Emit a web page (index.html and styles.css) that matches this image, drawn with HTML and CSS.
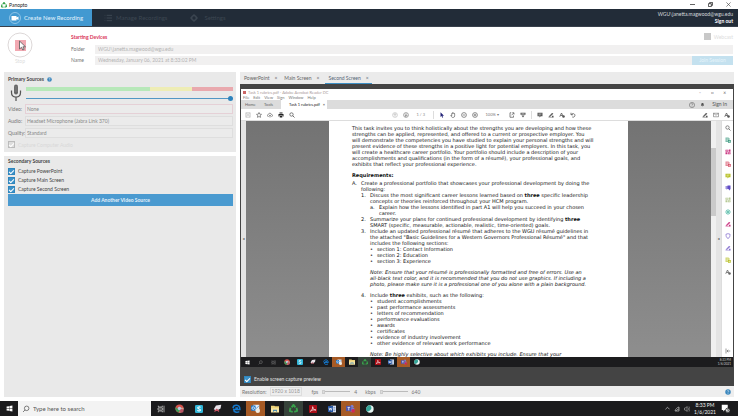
FILE: index.html
```html
<!DOCTYPE html>
<html lang="en">
<head>
<meta charset="utf-8">
<title>Panopto</title>
<link rel="stylesheet" href="styles.css">
</head>
<body>
<svg class="sprite" aria-hidden="true">
  <symbol id="win" viewBox="0 0 12 12"><path fill="#fff" d="M1 2.6 5.4 2v3.7H1zM6 1.9 11 1v4.7H6zM1 6.3h4.4V10L1 9.4zM6 6.3h5V11l-5-.9z"/></symbol>
  <symbol id="search" viewBox="0 0 12 12"><circle cx="7" cy="5" r="3.4" fill="none" stroke="currentColor"/><path d="M4.6 7.4 1.5 10.5" stroke="currentColor"/></symbol>
  <symbol id="zoomer" viewBox="0 0 12 12"><circle cx="5" cy="5" r="3.4" fill="none" stroke="currentColor" stroke-width="1.5"/><path d="M7.5 7.5 11 11" stroke="currentColor" stroke-width="1.7"/></symbol>
  <symbol id="taskview" viewBox="0 0 12 12"><path d="M2 1v2h6V1M2 11V9h6v2M1.500 4.500h7v3h-7zM10.500 1v10" fill="none" stroke="#ddd"/></symbol>
  <symbol id="chrome" viewBox="0 0 12 12"><circle cx="6" cy="6" r="5.500" fill="#d6534c"/><path d="M.8 4.200A5.500 5.500 0 0 0 5 11.400L7 7.500 3.500 6z" fill="#3f9a58"/><path d="M11.400 5A5.500 5.500 0 0 1 5.500 11.500L8 7V5z" fill="#d7a08e"/><circle cx="6" cy="6" r="2.300" fill="#bcc9df"/><circle cx="9" cy="9" r="2.500" fill="#b65363"/></symbol>
  <symbol id="skype" viewBox="0 0 12 12"><rect width="12" height="12" rx="2" fill="#31b6d9"/><path d="M8.300 3.700C7 2.400 4 2.600 4 4.300c0 2 4.200 1.200 4.200 3.300 0 1.700-3.200 1.900-4.600.5" fill="none" stroke="#fff" stroke-width="1.600"/></symbol>
  <symbol id="snip" viewBox="0 0 12 12"><path d="M1 7 4 2l7-1-1 5-5 3z" fill="#e7e3ea"/><path d="m2 10 3-3 3 3" fill="none" stroke="#c85262" stroke-width="1.500"/></symbol>
  <symbol id="edge" viewBox="0 0 12 12"><path d="M2 7.200h8.500C10.500 0 2 .5 1.300 5.500M2.300 6.500c-.5 4.500 4.200 5.300 7.500 3.700M4.500 5.200h3.600" fill="none" stroke="#1578cc" stroke-width="2"/></symbol>
  <symbol id="outlook" viewBox="0 0 12 12"><rect x="3" y="1" width="8" height="8" fill="#e9eef6"/><path d="m3 2 4 4 4-4" fill="none" stroke="#3d87c9"/><rect x="0" y="2" width="6" height="7" fill="#2576c3"/><circle cx="3" cy="5.500" r="1.700" fill="none" stroke="#fff"/><circle cx="9" cy="9" r="3" fill="#f1ede4"/></symbol>
  <symbol id="explorer" viewBox="0 0 12 12"><path d="M0 1h5l1 1h6v9H0z" fill="#efd47b"/><path d="M0 5h12v6H0z" fill="#f8e7a7"/><path d="M3 7h6v4H8V9H4v2H3z" fill="#508fb0"/></symbol>
  <symbol id="panopto" viewBox="0 0 12 12"><path d="M3.500 4.500 6 1l2.500 3.500M10 5l1 4-4 1.500M5 10.500 1 9.500 2 5" fill="none" stroke="#38a34b" stroke-width="2.400"/></symbol>
  <symbol id="acrobat" viewBox="0 0 12 12"><rect width="12" height="12" rx="1" fill="#a80d16"/><path d="M2 9.500C4 8 6 5 5.500 2.500 6 6 8 8 10.500 7.500 7 6.500 4 8 2 9.500" fill="none" stroke="#fff"/></symbol>
  <symbol id="word" viewBox="0 0 12 12"><rect x="4" y="1" width="8" height="10" fill="#e6edf8"/><path d="M8 3.500h3M8 6h3M8 8.500h3" stroke="#3c62ab"/><rect y="1.500" width="7.500" height="9" fill="#2453a0"/><path d="M1.500 4 2.500 8 3.700 4.500 5 8 6 4" fill="none" stroke="#fff"/></symbol>
  <symbol id="teams" viewBox="0 0 12 12"><circle cx="8" cy="3" r="2" fill="#7f82d4"/><path d="M5 5h6v4l-3 2-3-2z" fill="#777bd0"/><rect y="2.500" width="7" height="7" fill="#5055a9"/><path d="M2 4.500h3.500M3.700 4.500v4" stroke="#fff"/><circle cx="9.500" cy="9" r="2.500" fill="#d32954"/></symbol>
  <symbol id="globe" viewBox="0 0 12 12"><circle cx="6" cy="6" r="5.500" fill="#e7f5f2"/><path d="M6 .5A5.500 5.500 0 0 0 2 10l3-1 3-3V3z" fill="#35a598"/></symbol>
  <symbol id="help" viewBox="0 0 12 12"><circle cx="6" cy="6" r="5.500" fill="#3b87bd"/><path d="M4.300 4.500c.2-2 3.500-1.700 3.300 0C7.500 5.600 6 5.600 6 7.200M6 8.500V10" fill="none" stroke="#fff"/></symbol>
  <symbol id="ask" viewBox="0 0 12 12"><circle cx="6" cy="6" r="5.200" fill="none" stroke="currentColor"/><path d="M4.300 4.500c.2-2 3.500-1.700 3.300 0C7.500 5.600 6 5.600 6 7.200M6 8.300v1.200" fill="none" stroke="currentColor"/></symbol>
  <symbol id="page" viewBox="0 0 12 12"><path d="M1 1h6l2 2v7H1z" fill="currentColor" opacity=".65"/><path d="M3 4h4M3 6.500h3" stroke="#fff"/><path d="M6 6h5.500v5.500H6z" fill="currentColor"/><path d="M7 8.800h3.500M8.800 7v3.500" stroke="#fff" stroke-width=".8"/></symbol>
  <symbol id="grid" viewBox="0 0 12 12"><path d="M1 1.500h6v4H1zM1 6.500h4v4H1zM6 6.500h5v4H6zM8 1h3v4.500H8z" fill="currentColor"/><path d="M2 3.500h4M7 8.500h3" stroke="#fff"/></symbol>
  <symbol id="bubble" viewBox="0 0 12 12"><path d="M1 1.500h10v7H7.500L5 11V8.500H1z" fill="currentColor"/><path d="M3 4h6M3 6h4" stroke="#fff" stroke-width=".9"/></symbol>
  <symbol id="duo" viewBox="0 0 12 12"><path d="M1 2h7v6H5l-2 2V8H1z" fill="currentColor" opacity=".6"/><path d="M5 1h6v7L8.500 11 7 8H5z" fill="currentColor"/></symbol>
  <symbol id="ring" viewBox="0 0 12 12"><circle cx="6" cy="6" r="4.200" fill="none" stroke="currentColor" stroke-width="1.600"/><path d="M4 4.500h4v3H4z" fill="currentColor"/></symbol>
  <symbol id="pen" viewBox="0 0 12 12"><path d="M1 10.500h10M2 9l6.500-7L10 3.500 4 9z" fill="currentColor" stroke="currentColor"/><path d="M8 7.500h3v3H8z" fill="currentColor"/></symbol>
  <symbol id="shield" viewBox="0 0 12 12"><path d="M6 1.200c1.500 1 3 1 4 1 0 4.500-.5 7-4 8.800C2.500 9.200 2 6.700 2 2.200c1 0 2.500 0 4-1z" fill="none" stroke="currentColor" stroke-width="1.500"/></symbol>
  <symbol id="person" viewBox="0 0 12 12"><path d="M1.500 9.500 5 2l3.500 7.500M3 7h4" fill="none" stroke="currentColor" stroke-width="1.600"/><circle cx="9" cy="9" r="2.500" fill="currentColor"/></symbol>
  <symbol id="save" viewBox="0 0 12 12"><path d="M1.500 1.500h9v9h-9zM3.500 1.500v3h5v-3M3.500 10.500v-4h5v4" fill="none" stroke="currentColor"/></symbol>
  <symbol id="star" viewBox="0 0 12 12"><path d="m6 1 1.500 3.300 3.500.4-2.600 2.400.7 3.600L6 9l-3.100 1.700.7-3.600L1 4.700l3.500-.4z" fill="none" stroke="currentColor" stroke-width="1.300"/></symbol>
  <symbol id="cloud" viewBox="0 0 12 12"><path d="M3.500 9H3a2 2 0 0 1-.3-4C3 1.500 8.500 1.500 9 5a2 2 0 0 1 0 4h-.5M6 11V6M4.200 7.500 6 5.800l1.800 1.700" fill="none" stroke="currentColor" stroke-width="1.200"/></symbol>
  <symbol id="print" viewBox="0 0 12 12"><path d="M3 1h6v2H3zM1 4h10v5H9.500V7h-7v2H1zM3.500 8h5v3h-5z" fill="currentColor"/></symbol>
  <symbol id="up" viewBox="0 0 12 12"><circle cx="6" cy="6" r="4.800" fill="none" stroke="currentColor"/><path d="M6 9V3.500M3.700 5.500 6 3.200l2.300 2.300" fill="none" stroke="currentColor" stroke-width="1.300"/></symbol>
  <symbol id="down" viewBox="0 0 12 12"><circle cx="6" cy="6" r="4.800" fill="none" stroke="currentColor"/><path d="M6 3v5.500M3.700 6.500 6 8.800l2.300-2.300" fill="none" stroke="currentColor" stroke-width="1.300"/></symbol>
  <symbol id="minus" viewBox="0 0 12 12"><circle cx="6" cy="6" r="4.800" fill="none" stroke="currentColor" stroke-width="1.300"/><path d="M3.500 6h5" stroke="currentColor" stroke-width="1.300"/></symbol>
  <symbol id="plus" viewBox="0 0 12 12"><circle cx="6" cy="6" r="4.800" fill="none" stroke="currentColor" stroke-width="1.300"/><path d="M3.500 6h5M6 3.500v5" stroke="currentColor" stroke-width="1.300"/></symbol>
  <symbol id="arrow" viewBox="0 0 12 12"><path d="M3 .5v9.500l2.300-2 1.500 3.500 1.500-.7L6.800 7.500H10z" fill="currentColor"/></symbol>
  <symbol id="hand" viewBox="0 0 12 12"><path d="M3.500 7.500V3.200c0-1 1.300-1 1.300 0V2c0-1 1.500-1 1.500 0v.5c0-1 1.500-1 1.500 0v1c0-1 1.500-.8 1.500 0v4.200c0 4-5 4.300-6.500 1.500L1.500 6.800c.5-1 1.500-.3 2 .7z" fill="none" stroke="currentColor" stroke-width="1.300"/></symbol>
  <symbol id="fit" viewBox="0 0 12 12"><path d="M2 4V1.500h2.500M2 4l0 6.500h7V7M5 6.500 9.500 2M6.500 1.500h3.500V5" fill="none" stroke="currentColor" stroke-width="1.400"/></symbol>
  <symbol id="screen" viewBox="0 0 12 12"><path d="M1 1.500h10v4H1zM3 7l3 4 3-4z" fill="currentColor"/><path d="M3 3.500h6" stroke="#fff"/></symbol>
  <symbol id="undo" viewBox="0 0 12 12"><path d="M2 1.500v4h4M2.500 5.200c3-4 8-1.200 7.300 2C9.300 10 7 11 4.500 10" fill="none" stroke="currentColor" stroke-width="1.600"/></symbol>
  <symbol id="mail" viewBox="0 0 12 12"><path d="M1 2.500h10v7H1zl5 4 5-4" fill="none" stroke="currentColor"/></symbol>
  <symbol id="bell" viewBox="0 0 12 12"><path d="M2 9c2-1.500 0-6.500 4-6.500S8 7.500 10 9zM5 10h2v1H5z" fill="currentColor"/></symbol>
  <symbol id="expand" viewBox="0 0 12 12"><path d="M2 1v10M10.500 6H4M6.500 3.500 4 6l2.500 2.500" fill="none" stroke="currentColor" stroke-width="1.300"/></symbol>
</svg>

<header class="titlebar">
  <svg class="icon i6"><use href="#panopto"/></svg>
  <span class="app-name">Panopto</span>
  <div class="window-buttons">
    <button aria-label="Minimize"><svg class="icon i5" viewBox="0 0 12 12"><path d="M0 6h12" stroke="#444" stroke-width="2"/></svg></button>
    <button aria-label="Restore"><svg class="icon i5" viewBox="0 0 12 12"><path d="M1 4h7v7H1zM4 4V1h7v7H8" fill="none" stroke="#333" stroke-width="2"/></svg></button>
    <button aria-label="Close"><svg class="icon i5" viewBox="0 0 12 12"><path d="m1 1 10 10M11 1 1 11" stroke="#444" stroke-width="1.500"/></svg></button>
  </div>
</header>

<nav class="nav">
  <a class="nav-item active" href="#new"><svg class="icon i12" viewBox="0 0 24 24"><circle cx="12" cy="12" r="11" fill="none" stroke="#a7d2ee" stroke-width="1.500"/><path d="M5 8h10v3l4-2v7l-4-2v3H5z" fill="#fff"/></svg>Create New Recording</a>
  <a class="nav-item manage" href="#manage"><svg class="icon i8" viewBox="0 0 12 12"><path d="M1 2h1M4 2h8M1 6h1M4 6h8M1 10h1M4 10h8" stroke="currentColor" stroke-width="1.500"/></svg>Manage Recordings</a>
  <a class="nav-item settings" href="#settings"><svg class="icon i8" viewBox="0 0 12 12"><circle cx="6" cy="6" r="3.500" fill="none" stroke="currentColor" stroke-width="2"/><path d="M6 0v3M6 9v3M0 6h3M9 6h3" stroke="currentColor" stroke-width="1.500"/></svg>Settings</a>
  <div class="account"><span>WGU\janetta.magwood@wgu.edu</span><a href="#out">Sign out</a></div>
</nav>

<section class="session">
  <div class="record">
    <button class="record-button" aria-label="Stop"><svg class="record-icon" viewBox="0 0 26 26"><circle cx="13" cy="13" r="12" fill="#fff" stroke="#ddd8d8"/><rect x="8" y="8" width="11" height="11" fill="#f2a9b2"/><path d="M12.500 9v8l2-1.700 1.300 2.700 1.400-.7-1.300-2.500h2.600z" fill="#fff" stroke="#555" stroke-width=".8"/></svg></button>
    <span>Stop</span>
  </div>
  <form class="details">
    <div class="status-row"><strong>Starting Devices</strong><label class="webcast"><input type="checkbox" disabled>Webcast</label></div>
    <div class="field"><label for="folder">Folder</label><select id="folder" disabled><option>WGU\janetta.magwood@wgu.edu</option></select></div>
    <div class="field"><label for="name">Name</label><div class="name-box"><input id="name" value="Wednesday, January 06, 2021 at 8:33:02 PM" disabled><button type="button" disabled>Join Session</button></div></div>
  </form>
</section>

<main class="workspace">
  <aside class="sources">
    <section class="panel primary">
      <h2>Primary Sources <svg class="icon i5"><use href="#help"/></svg></h2>
      <div class="audio">
        <svg class="mic" viewBox="0 0 24 36"><rect x="8" y="1" width="8" height="20" rx="4" fill="#666"/><path d="M3 13v4c0 12 18 12 18 0v-4M12 26v8" fill="none" stroke="#555" stroke-width="2.500"/><path d="M9 6h6M9 10h6M9 14h6" stroke="#999"/></svg>
        <div class="levels"><div class="meter"><i class="ok"></i><i class="warm"></i><i class="hot"></i></div><input class="volume" type="range" value="100" aria-label="Volume"></div>
      </div>
      <div class="source-row"><label for="video">Video:</label><select id="video" class="alert"><option>None</option></select></div>
      <div class="source-row"><label for="audio">Audio:</label><select id="audio"><option>Headset Microphone (Jabra Link 370)</option></select></div>
      <div class="source-row"><label for="quality">Quality:</label><select id="quality"><option>Standard</option></select></div>
      <label class="check faded"><input type="checkbox" checked disabled>Capture Computer Audio</label>
    </section>
    <section class="panel secondary">
      <h2>Secondary Sources</h2>
      <label class="check"><input type="checkbox" checked>Capture PowerPoint</label>
      <label class="check"><input type="checkbox" checked>Capture Main Screen</label>
      <label class="check"><input type="checkbox" checked>Capture Second Screen</label>
      <button class="add">Add Another Video Source</button>
    </section>
  </aside>

  <section class="viewer">
    <div class="tabs"><button>PowerPoint <span>×</span></button><button>Main Screen <span>×</span></button><button class="selected">Second Screen <span>×</span></button></div>
    <div class="stage">
      <div class="screen">
        <div class="pdf-title"><i></i>Task 1 rubrics.pdf - Adobe Acrobat Reader DC<span class="pdf-window">–</span><span>▫</span><span>×</span></div>
        <div class="pdf-menu"><b>File</b><b>Edit</b><b>View</b><b>Sign</b><b>Window</b><b>Help</b></div>
        <div class="pdf-tabs"><span class="home">Home</span><span class="tools-tab">Tools</span><span class="file">Task 1 rubrics.pdf <b>×</b></span><div class="pdf-user"><svg class="icon i6"><use href="#ask"/></svg><svg class="icon i5"><use href="#bell"/></svg><span>Sign In</span></div></div>
        <div class="pdf-bar">
          <div class="group left"><svg class="icon i6 pale"><use href="#save"/></svg><svg class="icon i6"><use href="#star"/></svg><svg class="icon i6"><use href="#cloud"/></svg><svg class="icon i6 ink"><use href="#print"/></svg><svg class="icon i6"><use href="#zoomer"/></svg></div>
          <div class="group mid"><svg class="icon i6 pale"><use href="#up"/></svg><svg class="icon i6"><use href="#down"/></svg><span class="pages">1 / 3</span><i class="rule"></i><svg class="icon i6 navy"><use href="#arrow"/></svg><svg class="icon i6"><use href="#hand"/></svg><svg class="icon i6"><use href="#minus"/></svg><svg class="icon i6"><use href="#plus"/></svg><span class="percent">100% ▾</span><svg class="icon i6"><use href="#fit"/></svg><svg class="icon i6"><use href="#screen"/></svg><i class="rule"></i><svg class="icon i6"><use href="#bubble"/></svg><svg class="icon i6"><use href="#pen"/></svg><svg class="icon i6"><use href="#person"/></svg><svg class="icon i6"><use href="#undo"/></svg></div>
          <div class="group right"><svg class="icon i6"><use href="#pen"/></svg><svg class="icon i6"><use href="#mail"/></svg><svg class="icon i6"><use href="#person"/></svg></div>
        </div>
        <div class="pdf-body">
          <div class="gutter">◂</div>
          <div class="canvas">
            <article class="page">
              <p>This task invites you to think holistically about the strengths you are developing and how these<br>strengths can be applied, represented, and offered to a current or prospective employer. You<br>will demonstrate the competencies you have studied to explain your personal strengths and will<br>present evidence of these strengths in a positive light for potential employers. In this task, you<br>will create a healthcare career portfolio. Your portfolio should include a description of your<br>accomplishments and qualifications (in the form of a résumé), your professional goals, and<br>exhibits that reflect your professional experience.</p>
              <h3>Requirements:</h3>
              <ol class="alpha"><li>Create a professional portfolio that showcases your professional development by doing the<br>following:
                <ol class="numbers">
                  <li>Discuss the most significant career lessons learned based on <b>three</b> specific leadership<br>concepts or theories reinforced throughout your HCM program.
                    <ol class="lower"><li>Explain how the lessons identified in part A1 will help you succeed in your chosen<br>career.</li></ol></li>
                  <li>Summarize your plans for continued professional development by identifying <b>three</b><br>SMART (specific, measurable, actionable, realistic, time-oriented) goals.</li>
                  <li>Include an updated professional résumé that adheres to the WGU résumé guidelines in<br>the attached "Basic Guidelines for a Western Governors Professional Résumé" and that<br>includes the following sections:
                    <ul><li>section 1: Contact Information</li><li>section 2: Education</li><li>section 3: Experience</li></ul>
                    <p class="note">Note: Ensure that your résumé is professionally formatted and free of errors. Use an<br>all-black text color, and it is recommended that you do not use graphics. If including a<br>photo, please make sure it is a professional one of you alone with a plain background.</p></li>
                  <li>Include <b>three</b> exhibits, such as the following:
                    <ul><li>student accomplishments</li><li>past performance assessments</li><li>letters of recommendation</li><li>performance evaluations</li><li>awards</li><li>certificates</li><li>evidence of industry involvement</li><li>other evidence of relevant work performance</li></ul>
                    <p class="note">Note: Be highly selective about which exhibits you include. Ensure that your</p></li>
                </ol></li></ol>
            </article>
          </div>
          <div class="scroll"><i></i></div>
          <div class="gutter">◂</div>
          <div class="tool-rail">
            <svg class="icon i6"><use href="#zoomer"/></svg><svg class="icon i6 teal"><use href="#page"/></svg><svg class="icon i6 pink"><use href="#grid"/></svg><svg class="icon i6 red"><use href="#page"/></svg><svg class="icon i6 lime"><use href="#bubble"/></svg><svg class="icon i6 violet"><use href="#duo"/></svg><svg class="icon i6 sage"><use href="#grid"/></svg><svg class="icon i6 aqua"><use href="#ring"/></svg><svg class="icon i6 pink"><use href="#pen"/></svg><svg class="icon i6 lilac"><use href="#shield"/></svg><svg class="icon i6 lilac"><use href="#pen"/></svg><svg class="icon i6 lime"><use href="#page"/></svg><svg class="icon i6"><use href="#person"/></svg><svg class="icon i6 last"><use href="#expand"/></svg>
          </div>
        </div>
        <div class="mini-taskbar"><span><svg class="icon i5"><use href="#win"/></svg></span><span><svg class="icon i5 grey"><use href="#search"/></svg></span><span><svg class="icon i5 dim"><use href="#taskview"/></svg></span><span><svg class="icon i6"><use href="#chrome"/></svg></span><span><svg class="icon i6"><use href="#skype"/></svg></span><span><svg class="icon i6"><use href="#snip"/></svg></span><span><svg class="icon i6"><use href="#edge"/></svg></span><span class="hot-app"><svg class="icon i6"><use href="#outlook"/></svg></span><span><svg class="icon i6"><use href="#explorer"/></svg></span><span class="open-app"><svg class="icon i6"><use href="#panopto"/></svg></span><span><svg class="icon i6"><use href="#acrobat"/></svg></span><span><svg class="icon i6"><use href="#word"/></svg></span><span class="hot-app"><svg class="icon i6"><use href="#teams"/></svg></span><span><svg class="icon i6"><use href="#globe"/></svg></span><time>8:33 PM<br>1/6/2021</time></div>
      </div>
      <label class="check preview"><input type="checkbox" checked>Enable screen capture preview</label>
    </div>
    <div class="capture">
      <label for="res">Resolution:</label><select id="res" disabled><option>1920 x 1018</option></select>
      <label for="fps">fps</label><input id="fps" type="range" value="0" disabled><output class="fps-value">4</output>
      <label for="kbps">kbps</label><input id="kbps" type="range" value="0" disabled><output>640</output>
      <button class="help" aria-label="Help"><svg class="icon i6"><use href="#help"/></svg></button>
    </div>
  </section>
</main>

<footer class="taskbar">
  <button class="start" aria-label="Start"><svg class="icon i7"><use href="#win"/></svg></button>
  <label class="finder"><svg class="icon i8"><use href="#search"/></svg><input placeholder="Type here to search" aria-label="Search"></label>
  <div class="apps"><button aria-label="Task View"><svg class="icon i8"><use href="#taskview"/></svg></button><button aria-label="Chrome"><svg class="icon i9"><use href="#chrome"/></svg></button><button aria-label="Skype"><svg class="icon i8"><use href="#skype"/></svg></button><button aria-label="Snip"><svg class="icon i9"><use href="#snip"/></svg></button><button aria-label="Edge"><svg class="icon i9"><use href="#edge"/></svg></button><button class="hot-app" aria-label="Outlook"><svg class="icon i9"><use href="#outlook"/></svg></button><button aria-label="Explorer"><svg class="icon i8"><use href="#explorer"/></svg></button><button class="open-app" aria-label="Panopto"><svg class="icon i9"><use href="#panopto"/></svg></button><button aria-label="Acrobat"><svg class="icon i8"><use href="#acrobat"/></svg></button><button aria-label="Word"><svg class="icon i8"><use href="#word"/></svg></button><button class="hot-app" aria-label="Teams"><svg class="icon i9"><use href="#teams"/></svg></button><button aria-label="Browser"><svg class="icon i8"><use href="#globe"/></svg></button></div>
  <div class="tray">
    <svg class="icon i5" viewBox="0 0 12 12"><path d="m1 8 5-5 5 5" fill="none" stroke="#ddd" stroke-width="1.500"/></svg>
    <svg class="icon i6" viewBox="0 0 12 12"><path d="M2 10C3 6 6 3 10 2v8zM5 10c0-2 2-4 5-4" fill="none" stroke="#ccc" stroke-width="1.300"/></svg>
    <svg class="icon i6" viewBox="0 0 12 12"><path d="M1 4h2l3-3v10L3 8H1zM8 3c2 2 2 4 0 6M10 1c3 3 3 7 0 10" fill="none" stroke="#ccc"/></svg>
    <time>8:33 PM<br>1/6/2021</time>
    <svg class="icon i9" viewBox="0 0 12 12"><path d="M1 1h8v7H5L3 10V8H1z" fill="#fff"/><circle cx="9" cy="8.500" r="3" fill="#ddd" stroke="#222"/><path d="M8 7.500h2v2H8" fill="none" stroke="#333" stroke-width=".7"/></svg>
  </div>
</footer>
</body>
</html>
```
FILE: styles.css
```css
* { box-sizing: border-box; }
body { margin: 0; height: 100vh; display: flex; flex-direction: column; overflow: hidden; background: #fff; color: #444; font: 5px/6px Lato, "Open Sans", sans-serif; }
button, input, select { margin: 0; padding: 0; border: 0; border-radius: 0; background: none; color: inherit; font: inherit; appearance: none; opacity: 1; }
a { color: inherit; text-decoration: none; }
h2, h3, p, ol, ul { margin: 0; padding: 0; font-size: inherit; }
.sprite { display: none; }
.icon { display: block; flex: none; }
.i5 { width: 5px; height: 5px; }
.i6 { width: 6px; height: 6px; }
.i7 { width: 7px; height: 7px; }
.i8 { width: 8px; height: 8px; }
.i9 { width: 9px; height: 9px; }
.i12 { width: 12px; height: 12px; }

.titlebar { flex: none; height: 9px; display: flex; align-items: center; gap: 2px; padding: 0 1px; color: #222; }
.window-buttons { margin-left: auto; display: flex; gap: 13px; padding-right: 6px; }
.window-buttons button { display: flex; }

.nav { flex: none; height: 18px; display: flex; align-items: stretch; background: #222c38; border-bottom: 1px solid #38404b; }
.nav-item { display: flex; align-items: center; gap: 4px; padding-left: 12px; color: #3d4752; font-size: 6px; }
.nav-item.active { width: 92px; padding-left: 9px; gap: 3px; background: #4299d1; color: #e2f2fc; }
.nav-item.settings { padding-left: 23px; gap: 6px; }
.account { margin-left: auto; padding: 2px 5px 0 0; display: flex; flex-direction: column; align-items: flex-end; color: #d5d9dd; line-height: 7px; }
.account a { color: #fff; font-weight: 700; }

.session { flex: none; height: 43px; display: flex; padding: 5px 5px 0 7px; }
.record { width: 64px; display: flex; flex-direction: column; align-items: flex-start; color: #ddd; }
.record-button { display: block; }
.record-icon { display: block; width: 26px; height: 26px; }
.record span { width: 26px; text-align: center; }
.details { flex: 1; display: flex; flex-direction: column; gap: 2px; }
.status-row { height: 9px; margin-bottom: 2px; display: flex; justify-content: space-between; align-items: center; }
.status-row strong { color: #d93457; font-weight: 700; }
.webcast { display: flex; align-items: center; gap: 3px; color: #ddd; }
.webcast input { width: 7px; height: 7px; background: #c8c8c8; }
.field { display: flex; height: 9px; line-height: 9px; }
.field > label { width: 24px; color: #777; }
.field select, .name-box { flex: 1; height: 9px; background: #f1f0f0; color: #b4b4b4; }
.field select { padding-left: 3px; }
.name-box { display: flex; }
.name-box input { flex: 1; padding-left: 3px; }
.name-box button { width: 41px; background: #c4e1ef; color: #e6f4fa; }

.workspace { flex: 1; min-height: 0; display: grid; grid-template-columns: 232px minmax(0, 1fr); gap: 4px; padding: 2px 4px 4px; }
.sources { display: flex; flex-direction: column; gap: 4px; }
.panel { background: #e9e9e9; padding: 4px 3px 0 4px; }
.primary { height: 80px; }
.secondary { flex: 1; padding-top: 2px; }
.panel h2 { display: flex; align-items: center; gap: 3px; color: #444; font-weight: 700; }
.audio { display: flex; height: 22px; padding: 2px 0 0 2px; }
.mic { width: 12px; height: 18px; }
.levels { flex: 1; margin-left: 4px; padding-top: 3px; }
.meter { display: flex; height: 4px; }
.meter .ok { flex: 60; background: #b7e8b9; }
.meter .warm { flex: 20; background: #eeedb5; }
.meter .hot { flex: 20; background: #e9a9ae; }
input[type="range"] { display: block; height: 6px; background: linear-gradient(#bbb, #bbb) center / 100% 1px no-repeat; }
input[type="range"]::-webkit-slider-thumb { appearance: none; width: 3px; height: 4px; background: #ddd; border: 1px solid #ccc; }
input[type="range"].volume { width: 100%; margin-top: 4px; background-image: linear-gradient(#5297c5, #5297c5); }
input[type="range"].volume::-webkit-slider-thumb { width: 5px; height: 5px; border: 0; border-radius: 50%; background: #2d83bd; }
.source-row { display: flex; height: 10px; margin-bottom: 2px; line-height: 10px; color: #777; }
.source-row label { width: 17px; }
.source-row select { flex: 1; padding-left: 1px; border: 1px solid #dedede; background: #ebebeb; color: #888; line-height: 8px; }
.source-row .alert { border-color: #e5d0d6; }
.check { display: flex; align-items: center; gap: 3px; height: 7px; margin-bottom: 1px; }
.check input { flex: none; width: 7px; height: 7px; border: 1px solid #2f86bd; background: #3d92c9; display: grid; place-items: center; }
.check input::before { content: ""; width: 2px; height: 4px; border: solid #fff; border-width: 0 1px 1px 0; transform: rotate(45deg); }
.check.faded { color: #d8d8d8; margin-top: 3px; }
.check.faded input { background: #ddd; border-color: #bbb; }
.secondary h2 { margin-bottom: 3px; }
.secondary .check { height: 8px; }
.add { width: 100%; height: 12px; background: #4a9ad0; color: #e4f1fa; font-weight: 700; }

.viewer { min-width: 0; min-height: 0; display: flex; flex-direction: column; }
.tabs { flex: none; height: 12px; display: flex; gap: 5px; padding-left: 3px; background: #ebebeb; color: #666; }
.tabs button { display: flex; align-items: center; gap: 5px; border-bottom: 1px solid transparent; padding: 0 1px; }
.tabs .selected { border-color: #3d8fc5; padding: 0 3px; color: #567; }
.stage { flex: 1; min-height: 0; display: flex; flex-direction: column; padding: 5px 1px 0; background: #444; }
.screen { flex: 1; min-height: 0; display: flex; flex-direction: column; background: #fff; }
.pdf-title, .pdf-menu { flex: none; height: 6px; display: flex; align-items: center; font-size: 4px; line-height: 5px; color: #777; padding-left: 2px; }
.pdf-title { gap: 2px; color: #a99; }
.pdf-title i { width: 3px; height: 3px; background: #c66; }
.pdf-title .pdf-window { margin-left: auto; }
.pdf-title span { flex: none; width: 10px; color: #555; font-family: "DejaVu Sans", sans-serif; }
.pdf-menu { height: 5px; gap: 4px; }
.pdf-menu b { font-weight: 400; }
.pdf-tabs { flex: none; height: 9px; display: flex; align-items: stretch; line-height: 9px; background: #dcdcdc; font-size: 4px; white-space: nowrap; }
.home { padding-left: 4px; width: 23px; color: #666; }
.tools-tab { width: 17px; color: #666; }
.file { width: 46px; display: flex; justify-content: space-between; padding: 0 2px 0 8px; background: #fff; color: #222; }
.file b { font-weight: 400; }
.pdf-user { margin-left: auto; display: flex; align-items: center; gap: 5px; padding-right: 6px; color: #555; font-size: 5px; }
.pdf-user span { padding-left: 2px; }
.pdf-bar { flex: none; height: 12px; display: grid; grid-template-columns: 1fr auto 1fr; align-items: center; border-bottom: 1px solid #ddd; padding: 0 3px 0 4px; color: #555; }
.group { display: flex; align-items: center; gap: 5px; }
.mid { padding-right: 8px; }
.right { justify-content: flex-end; }
.pages { width: 14px; padding-left: 3px; font-size: 4px; color: #888; }
.percent { width: 21px; padding-left: 3px; font-size: 4px; color: #777; white-space: nowrap; }
.rule { width: 1px; height: 8px; background: #ddd; }
.pale { color: #aaa; }
.ink { color: #222; }
.navy { color: #227; }
.grey { color: #999; }
.dim { opacity: .5; }
.pdf-body { flex: 1; min-height: 0; display: flex; overflow: hidden; }
.gutter { width: 5px; flex: none; display: flex; align-items: center; justify-content: center; background: #e4e4e4; color: #555; font: 4px/4px "DejaVu Sans", sans-serif; }
.canvas { flex: 1; min-width: 0; display: flex; justify-content: center; overflow: hidden; background: linear-gradient(#737373, #8e8e8e); }
.page { flex: none; width: 299px; padding: 4px 10px 0 23px; background: #fff; color: #111; font: 5px/6px "DejaVu Sans", sans-serif; white-space: nowrap; }
.page h3 { margin: 5px 0 2px; }
.page ol, .page ul { list-style: none; }
.page li { position: relative; padding-left: 9px; }
.page li::before { position: absolute; left: 0; top: 0; }
.alpha > li::before { content: "A."; }
.numbers { counter-reset: step; }
.numbers > li { counter-increment: step; }
.numbers > li::before { content: counter(step) "."; }
.lower > li::before { content: "a."; }
.page ul li { padding-left: 7px; }
.page ul li::before { content: "•"; }
.note { margin: 5px 0; font-style: italic; }
.scroll { flex: none; width: 5px; background: #f0f0f0; padding-top: 27px; }
.scroll i { display: block; height: 68px; background: #cacaca; }
.tool-rail { flex: none; width: 12px; display: flex; flex-direction: column; align-items: center; gap: 6px; padding: 4px 0 3px; border-left: 1px solid #ddd; color: #666; }
.last { margin-top: auto; }
.teal { color: #36977c; }
.pink { color: #c93480; }
.red { color: #d64a62; }
.lime { color: #b7bf22; }
.violet { color: #604cc5; }
.sage { color: #b5c893; }
.aqua { color: #45b59f; }
.lilac { color: #8670cf; }
.mini-taskbar { flex: none; height: 10px; display: flex; background: #1c1c1e; }
.mini-taskbar > span { width: 13px; display: grid; place-items: center; }
.mini-taskbar > span.hot-app, .hot-app { background: #a65a25; }
.open-app { background: #36423a; }
.mini-taskbar time { margin-left: auto; padding-right: 2px; font-size: 3px; line-height: 4px; color: #ccc; text-align: right; padding-top: 1px; }
.preview { flex: none; height: 19px; margin: 0; padding: 5px 0 0 3px; color: #e2e2e2; }
.capture { flex: none; height: 11px; display: flex; align-items: center; background: #eee; color: #777; padding: 0 3px 0 2px; }
.capture select { width: 32px; height: 9px; margin: 0 10px 0 3px; padding-left: 1px; border: 1px solid #ddd; color: #999; line-height: 7px; }
.capture input[type="range"] { width: 28px; margin: 0 4px; }
.capture .fps-value { width: 11px; }
.help { margin-left: auto; }

.taskbar { flex: none; height: 15px; display: flex; background: #1b1b1d; color: #eee; }
.start { width: 18px; display: grid; place-items: center; }
.finder { width: 133px; display: flex; align-items: center; gap: 3px; padding-left: 4px; background: #f3f3f3; color: #444; }
.finder input { flex: 1; min-width: 0; font-size: 6px; line-height: 8px; }
.finder input::placeholder { color: #555; opacity: 1; }
.apps { display: flex; }
.apps button { width: 19px; display: grid; place-items: center; }
.tray { margin-left: auto; display: flex; align-items: center; gap: 4px; padding-right: 8px; }
.tray time { margin-right: 1px; text-align: center; line-height: 7px; }
```
